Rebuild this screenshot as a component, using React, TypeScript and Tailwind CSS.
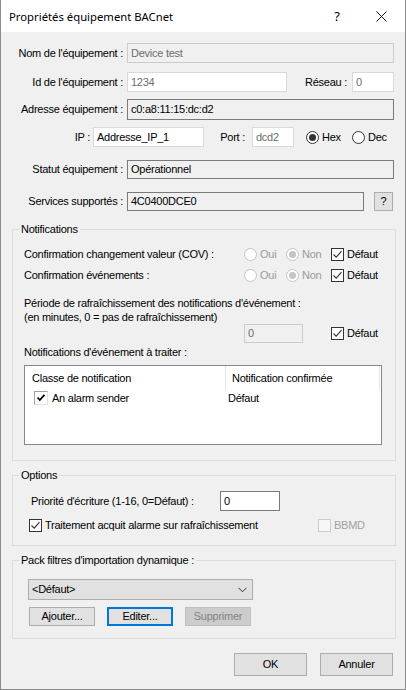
import React from "react";

const font = "font-['Liberation_Sans',Arial,sans-serif]";

type BoxKind = "disabled" | "readonly" | "white" | "whiteGray" | "edit";

const boxStyles: Record<BoxKind, string> = {
  disabled: "bg-[#f0f0f0] border-[#cccccc] text-[#6d6d6d]",
  readonly: "bg-[#f0f0f0] border-[#7a7a7a] text-black",
  white: "bg-white border-[#d9d9d9] text-black",
  whiteGray: "bg-white border-[#d9d9d9] text-[#6d6d6d]",
  edit: "bg-white border-[#7a7a7a] text-black",
};

const TextBox = ({ value, kind, className }: { value: string; kind: BoxKind; className: string }) => (
  <div className={`flex items-center border pl-[3px] text-[11px] leading-[13px] ${boxStyles[kind]} ${className}`}>
    {value}
  </div>
);

const Radio = ({ checked, disabled }: { checked?: boolean; disabled?: boolean }) => (
  <span
    className={`flex h-[13px] w-[13px] shrink-0 items-center justify-center rounded-full border bg-white ${
      disabled ? "border-[#c4c4c4]" : "border-[#333333]"
    }`}
  >
    {checked && (
      <span className={`h-[7px] w-[7px] rounded-full ${disabled ? "bg-[#c4c4c4]" : "bg-[#333333]"}`} />
    )}
  </span>
);

const CheckBox = ({ checked, disabled }: { checked?: boolean; disabled?: boolean }) => (
  <span
    className={`flex h-[13px] w-[13px] shrink-0 items-center justify-center border ${
      disabled ? "border-[#cccccc] bg-[#f7f7f7]" : "border-[#333333] bg-white"
    }`}
  >
    {checked && (
      <svg width="11" height="11" viewBox="0 0 11 11">
        <path d="M1.5 5.5 L4.2 8.2 L9.5 2.2" fill="none" stroke="#333333" strokeWidth="1.1" />
      </svg>
    )}
  </span>
);

const Button = ({ label, kind = "normal", className = "" }: { label: string; kind?: "normal" | "focus" | "disabled"; className?: string }) => {
  const styles = {
    normal: "bg-[#e1e1e1] border border-[#adadad] text-black",
    focus: "bg-[#e1e1e1] border-2 border-[#0078d7] text-black",
    disabled: "bg-[#cccccc] border border-[#bfbfbf] text-[#838383]",
  };
  return (
    <div className={`flex items-center justify-center text-[11px] leading-[13px] ${styles[kind]} ${className}`}>
      {label}
    </div>
  );
};

const Group = ({ title, className = "", children }: { title: string; className?: string; children: React.ReactNode }) => (
  <fieldset className={`ml-[11px] w-[384px] border border-[#dcdcdc] px-0 ${className}`}>
    <legend className="ml-[6px] px-[2px] text-[11px] leading-[13px]">{title}</legend>
    {children}
  </fieldset>
);

const OuiNon = () => (
  <>
    <div className="flex w-[42px] items-center gap-[3px] text-[#9a9a9a]">
      <Radio disabled />
      <span>Oui</span>
    </div>
    <div className="flex w-[45px] items-center gap-[3px] text-[#9a9a9a]">
      <Radio disabled checked />
      <span>Non</span>
    </div>
    <div className="flex items-center gap-[3px]">
      <CheckBox checked />
      <span>Défaut</span>
    </div>
  </>
);

export default function App() {
  return (
    <div className={`${font} flex h-[690px] w-[406px] flex-col border border-t-0 border-[#8c8c8c] bg-[#f0f0f0] text-[11px] leading-[13px] tracking-[-0.25px] text-black`}>
      {/* title bar */}
      <div className="flex h-[32px] shrink-0 items-center bg-white tracking-normal">
        <span className="ml-[8px] font-['Noto_Sans',sans-serif] text-[11.3px]">Propriétés équipement BACnet</span>
        <span className="ml-auto mr-[36px] font-['Noto_Sans',sans-serif] text-[13px]">?</span>
        <svg className="mr-[18px]" width="11" height="11" viewBox="0 0 11 11">
          <path d="M0.5 0.5 L10.5 10.5 M10.5 0.5 L0.5 10.5" stroke="#111" strokeWidth="1" />
        </svg>
      </div>

      {/* device fields */}
      <div className="mt-[11px] flex h-[20px] items-center">
        <span className="w-[122px] text-right">Nom de l'équipement :</span>
        <TextBox kind="disabled" value="Device test" className="ml-[4px] h-[20px] w-[267px]" />
      </div>

      <div className="mt-[9px] flex h-[20px] items-center">
        <span className="w-[122px] text-right">Id de l'équipement :</span>
        <TextBox kind="whiteGray" value="1234" className="ml-[4px] h-[20px] w-[160px]" />
        <span className="w-[60px] text-right">Réseau :</span>
        <TextBox kind="whiteGray" value="0" className="ml-[5px] h-[20px] w-[42px]" />
      </div>

      <div className="mt-[7px] flex h-[21px] items-center">
        <span className="w-[122px] text-right">Adresse équipement :</span>
        <TextBox kind="readonly" value="c0:a8:11:15:dc:d2" className="ml-[4px] h-[21px] w-[267px]" />
      </div>

      <div className="mt-[7px] flex h-[20px] items-center">
        <span className="w-[89px] text-right">IP :</span>
        <TextBox kind="white" value="Addresse_IP_1" className="ml-[3px] h-[20px] w-[111px]" />
        <span className="w-[41px] text-right">Port :</span>
        <TextBox kind="whiteGray" value="dcd2" className="ml-[7px] h-[20px] w-[42px]" />
        <div className="ml-[12px] flex w-[46px] items-center gap-[3px]">
          <Radio checked />
          <span>Hex</span>
        </div>
        <div className="flex items-center gap-[3px]">
          <Radio />
          <span>Dec</span>
        </div>
      </div>

      <div className="mt-[13px] flex h-[19px] items-center">
        <span className="w-[122px] text-right">Statut équipement :</span>
        <TextBox kind="readonly" value="Opérationnel" className="ml-[4px] h-[19px] w-[267px]" />
      </div>

      <div className="mt-[13px] flex h-[19px] items-center">
        <span className="w-[122px] text-right">Services supportés :</span>
        <TextBox kind="readonly" value="4C0400DCE0" className="ml-[4px] h-[19px] w-[237px]" />
        <Button label="?" className="ml-[10px] h-[19px] w-[19px]" />
      </div>

      {/* notifications */}
      <Group title="Notifications" className="mt-[12px] pb-[15px]">
        <div className="mt-[10px] flex h-[16px] items-center pl-[11px]">
          <span className="w-[220px]">Confirmation changement valeur (COV) :</span>
          <OuiNon />
        </div>
        <div className="mt-[5px] flex h-[16px] items-center pl-[11px]">
          <span className="w-[220px]">Confirmation événements :</span>
          <OuiNon />
        </div>
        <div className="mt-[13px] pl-[11px] leading-[14px]">
          <div>Période de rafraîchissement des notifications d'événement :</div>
          <div>(en minutes, 0 = pas de rafraîchissement)</div>
        </div>
        <div className="flex h-[19px] items-center pl-[231px]">
          <TextBox kind="disabled" value="0" className="h-[19px] w-[59px]" />
          <div className="ml-[28px] flex items-center gap-[3px]">
            <CheckBox checked />
            <span>Défaut</span>
          </div>
        </div>
        <div className="mt-[2px] pl-[11px] leading-[14px]">Notifications d'événement à traiter :</div>

        <div className="ml-[11px] mt-[6px] h-[80px] w-[358px] border border-[#828790] bg-white">
          <div className="flex h-[24px] items-center">
            <span className="w-[200px] pl-[7px]">Classe de notification</span>
            <span className="h-[24px] w-px bg-[#e5e5e5]" />
            <span className="w-[153px] pl-[6px]">Notification confirmée</span>
            <span className="h-[24px] w-px bg-[#e5e5e5]" />
          </div>
          <div className="flex h-[16px] items-center">
            <span className="ml-[9px] flex h-[14px] w-[14px] items-center justify-center border border-[#a0a0a0] border-r-[#e3e3e3] border-b-[#e3e3e3] bg-white">
              <svg width="10" height="10" viewBox="0 0 10 10">
                <path d="M1.5 4.5 L3.8 7 L8.5 1.8" fill="none" stroke="#000" strokeWidth="1.8" />
              </svg>
            </span>
            <span className="ml-[4px] w-[176px]">An alarm sender</span>
            <span>Défaut</span>
          </div>
        </div>
      </Group>

      {/* options */}
      <Group title="Options" className="mt-[8px] pb-[12px]">
        <div className="mt-[9px] flex h-[20px] items-center pl-[18px]">
          <span className="w-[189px]">Priorité d'écriture (1-16, 0=Défaut) :</span>
          <TextBox kind="edit" value="0" className="h-[20px] w-[60px]" />
        </div>
        <div className="mt-[6px] flex h-[16px] items-center pl-[16px]">
          <div className="flex w-[289px] items-center gap-[3px]">
            <CheckBox checked />
            <span>Traitement acquit alarme sur rafraîchissement</span>
          </div>
          <div className="flex items-center gap-[3px] text-[#a0a0a0]">
            <CheckBox disabled />
            <span>BBMD</span>
          </div>
        </div>
      </Group>

      {/* pack */}
      <Group title="Pack filtres d'importation dynamique :" className="mt-[8px] pb-[12px]">
        <div className="ml-[15px] mt-[12px] flex h-[21px] w-[225px] items-center border border-[#adadad] bg-[#e1e1e1] pl-[3px]">
          <span>&lt;Défaut&gt;</span>
          <svg className="ml-auto mr-[5px]" width="9" height="6" viewBox="0 0 9 6">
            <path d="M0.5 0.8 L4.5 4.8 L8.5 0.8" fill="none" stroke="#333" strokeWidth="1" />
          </svg>
        </div>
        <div className="ml-[16px] mt-[7px] flex gap-[12px]">
          <Button label="Ajouter..." className="h-[19px] w-[66px]" />
          <Button label="Editer..." kind="focus" className="h-[19px] w-[66px]" />
          <Button label="Supprimer" kind="disabled" className="h-[19px] w-[66px]" />
        </div>
      </Group>

      <div className="mt-[14px] flex justify-end gap-[13px] pr-[12px]">
        <Button label="OK" className="h-[23px] w-[73px]" />
        <Button label="Annuler" className="h-[23px] w-[73px]" />
      </div>
    </div>
  );
}
